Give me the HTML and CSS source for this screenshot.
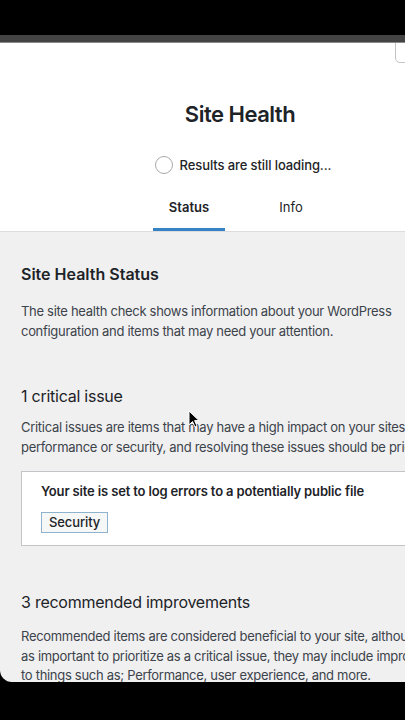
FILE: index.html
```html
<!DOCTYPE html>
<html lang="en">
<head>
    <meta charset="UTF-8">
    <meta name="viewport" content="width=device-width, initial-scale=1.0">
    <title>Site Health</title>
    <link rel="stylesheet" href="styles.css">
</head>
<body>
<div class="device">
    <div class="topbar"></div>
    <div class="toolbar"></div>

    <div class="screen">
        <div class="header">
            <button class="help-tab" type="button"></button>
            <h1>Site Health</h1>
            <div class="loading">
                <span class="spinner"></span>
                <span>Results are still loading...</span>
            </div>
            <nav class="tabs">
                <a href="#" class="tab active">Status</a>
                <a href="#" class="tab">Info</a>
            </nav>
        </div>

        <div class="content">
            <h2>Site Health Status</h2>
            <p class="intro">The site health check shows information about your WordPress configuration and items that may need your attention.</p>

            <h3>1 critical issue</h3>
            <p>Critical issues are items that may have a high impact on your sites performance or security, and resolving these issues should be prioritized.</p>

            <div class="issue">
                <div class="issue-title">Your site is set to log errors to a potentially public file</div>
                <span class="badge">Security</span>
            </div>

            <h3 class="recommended">3 recommended improvements</h3>
            <p class="lines">Recommended items are considered beneficial to your site, although not<br>as important to prioritize as a critical issue, they may include improvements<br>to things such as; Performance, user experience, and more.</p>

            <svg class="cursor" width="12" height="18" viewBox="0 0 12 18">
                <path d="M1 1 L1 15 L4.5 11.5 L7 17 L9 16 L6.6 10.6 L11 10.6 Z" fill="#000" stroke="#fff" stroke-width="1"/>
            </svg>
        </div>
    </div>
</div>
</body>
</html>
```

FILE: styles.css
```css
html, body {
    margin: 0;
    padding: 0;
    background: #000;
}
body {
    font-family: Inter, "Noto Sans", sans-serif;
    color: #1d2327;
}
.device {
    width: 405px;
    height: 720px;
    overflow: hidden;
    background: #000;
}
.topbar {
    height: 35px;
    background: #000;
}
.toolbar {
    height: 7px;
    background: #444;
    border-bottom: 1px solid #8a8a8a;
}
.screen {
    width: 480px;
    height: 639px;
    background: #f0f0f1;
    border-bottom-left-radius: 12px;
    overflow: hidden;
    position: relative;
}
.header {
    position: relative;
    height: 188px;
    background: #fff;
    border-bottom: 1px solid #dcdcde;
    text-align: center;
}
.help-tab {
    position: absolute;
    left: 395px;
    top: -3px;
    width: 60px;
    height: 23px;
    background: #fff;
    border: 1px solid #c3c4c7;
    border-radius: 0 0 5px 5px;
}
h1 {
    margin: 0;
    padding-top: 56px;
    font-size: 22px;
    line-height: 30px;
    font-weight: 600;
    letter-spacing: -0.5px;
}
.loading {
    margin-top: 26px;
    display: flex;
    justify-content: center;
    align-items: center;
    gap: 7px;
    font-size: 13px;
    line-height: 20px;
    font-weight: 500;
    letter-spacing: -0.1px;
    transform: translateX(3px);
}
.spinner {
    width: 16px;
    height: 16px;
    border: 1.5px solid #a7aaad;
    border-radius: 50%;
}
.tabs {
    margin-top: 22px;
    display: grid;
    grid-template-columns: 72px 72px;
    justify-content: center;
    column-gap: 30px;
}
.tab {
    display: block;
    font-size: 13px;
    line-height: 20px;
    padding-bottom: 11px;
    border-bottom: 3px solid transparent;
    color: #1d2327;
    text-decoration: none;
}
.tab.active {
    font-weight: 600;
    border-bottom-color: #3582c4;
}
.content {
    position: relative;
    padding: 30px 21px 0;
}
h2 {
    margin: 0;
    font-size: 16px;
    line-height: 24px;
    font-weight: 600;
}
h3 {
    margin: 43px 0 0;
    font-size: 16px;
    line-height: 24px;
    font-weight: 400;
    letter-spacing: -0.25px;
}
p {
    margin: 10px 0 0;
    font-size: 13px;
    line-height: 19.5px;
    color: #3c434a;
    width: 440px;
    letter-spacing: -0.3px;
}
p.lines {
    white-space: nowrap;
}
.intro {
    margin-top: 16px;
}
.issue {
    margin-top: 14px;
    background: #fff;
    border: 1px solid #c3c4c7;
    padding: 10px 19px 12px;
}
.issue-title {
    font-size: 13px;
    line-height: 19px;
    font-weight: 600;
    letter-spacing: -0.15px;
}
.badge {
    display: inline-block;
    margin-top: 11px;
    padding: 0 7px;
    font-size: 13px;
    line-height: 19px;
    font-weight: 500;
    letter-spacing: -0.1px;
    border: 1px solid #8fb3cf;
    background: #f6f7f7;
}
.recommended {
    margin-top: 44px;
}
.recommended + p {
    margin-top: 13px;
}
.cursor {
    position: absolute;
    left: 188px;
    top: 178px;
}
```
